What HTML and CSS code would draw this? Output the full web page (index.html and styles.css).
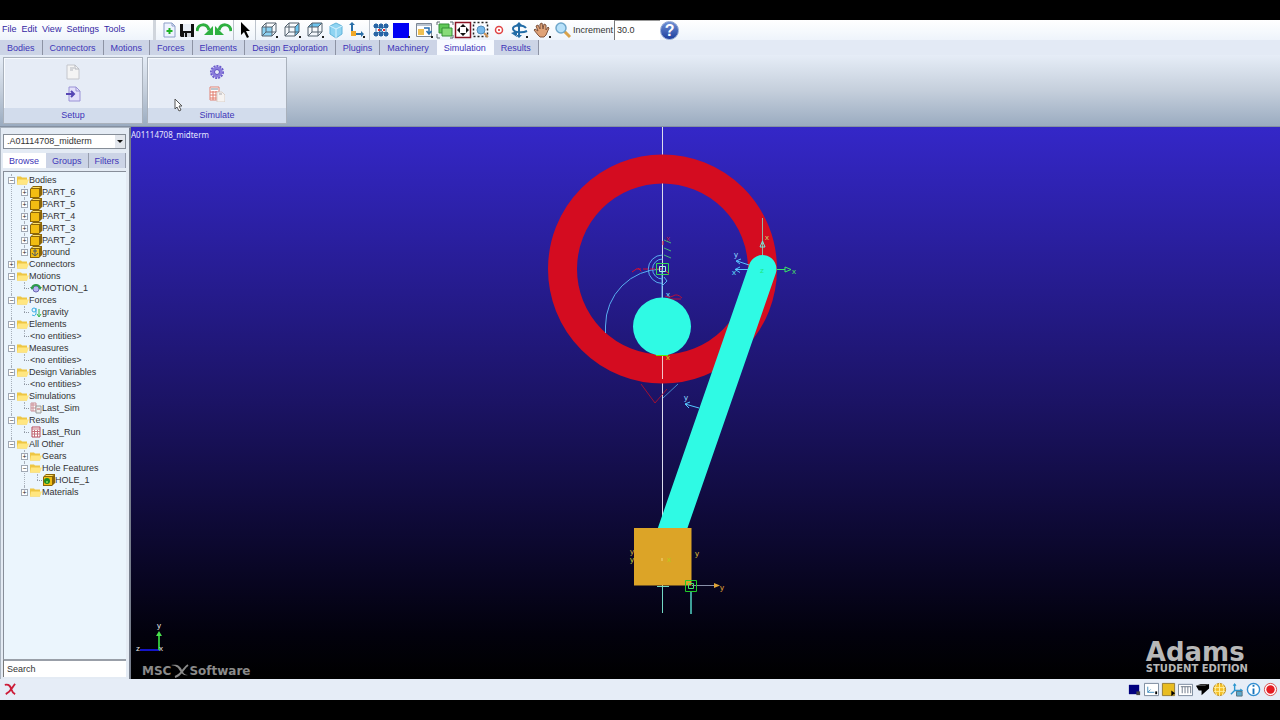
FILE: index.html
```html
<!DOCTYPE html>
<html lang="en">
<head>
    <meta charset="UTF-8">
    <meta name="viewport" content="width=device-width, initial-scale=1.0">
    <title>Adams Student Edition</title>
    <link rel="stylesheet" href="styles.css">
</head>
<body>

    <!-- Shared icons -->
    <svg class="sprite" aria-hidden="true">
        <symbol id="folder" viewBox="0 0 12 11"><path d="M0 2h4l1 1h5v7H0z" fill="#eec643"/><path d="M1 5h11l-2 5H0z" fill="#ffe680"/></symbol>
        <symbol id="part" viewBox="0 0 12 12"><path d="M0 3l3-3h9v9l-3 3H0z" fill="#8a6508"/><path d="M1 3h8v8H1z" fill="#f2bd12"/><path d="M2 2l1-1h8l-2 1z" fill="#ffe168"/></symbol>
        <symbol id="page" viewBox="0 0 16 16"><path d="M2 1h8l4 4v10H2z" fill="#f4f4f4" stroke="#c4c6cc"/><path d="M10 1v4h4M5 4h4M5 6h3" fill="none" stroke="#b4b7bf"/></symbol>
        <symbol id="calc" viewBox="0 0 12 12"><path d="M2 1h8v10H2z" fill="#fff" stroke="#b5485a"/><path d="M2 3h8M2 5.500h8M2 8h8M4.500 4v7M7.500 4v7" stroke="#c4707c"/></symbol>
        <symbol id="cube" viewBox="0 0 18 18"><path d="M2 6l4-4h10v9l-4 4H2zM2 6h10v9M12 6l4-4M6 2v9h10M6 11l-4 4" fill="none" stroke="#54626e"/></symbol>
    </svg>

    <div class="app">
        <header class="topbar">
            <nav class="menu" aria-label="Menu">
                <button>File</button><button>Edit</button><button>View</button><button>Settings</button><button>Tools</button>
            </nav>
            <div class="toolbar">
                <button class="tool" aria-label="New"><svg viewBox="0 0 18 18"><path d="M4 2h8l3 3v11H4z" fill="#eef3ff" stroke="#8d9fc8"/><path d="M12 2v3h3" fill="none" stroke="#8d9fc8"/><path d="M9.500 7v6M6.500 10h6" stroke="#20b324" stroke-width="2"/></svg></button>
                <button class="tool" aria-label="Save"><svg viewBox="0 0 18 18"><path d="M2 3h14v13H3l-1-1z" fill="#111"/><path d="M5 3h8v7H5z" fill="#e8eef6"/><path d="M6 12h7v4H6z" fill="#cfd4da"/><path d="M7 12h2v4H7z" fill="#111"/></svg></button>
                <button class="tool" aria-label="Redo"><svg viewBox="0 0 18 18"><path d="M1 10c1-8 10-8 12-1" fill="none" stroke="#2eb040" stroke-width="3"/><path d="M17 5v9H8z" fill="#2eb040"/></svg></button>
                <button class="tool" aria-label="Undo"><svg viewBox="0 0 18 18"><path d="M17 10c-1-8-10-8-12-1" fill="none" stroke="#2eb040" stroke-width="3"/><path d="M1 5v9h9z" fill="#2eb040"/></svg></button>
                <span class="divider"></span>
                <button class="tool" aria-label="Select"><svg viewBox="0 0 18 18"><path d="M5 1v13l3-3 3 6 2-1-3-6h4z" fill="#000"/></svg></button>
                <span class="divider"></span>
                <button class="tool wide" aria-label="Front view"><svg viewBox="0 0 18 18"><path d="M2 6h10v9H2z" fill="#8dd2f2"/><use href="#cube"/></svg></button>
                <button class="tool wide" aria-label="Right view"><svg viewBox="0 0 18 18"><path d="M12 6l4-4v9l-4 4z" fill="#6cc4ee"/><use href="#cube"/></svg></button>
                <button class="tool wide" aria-label="Top view"><svg viewBox="0 0 18 18"><path d="M2 6l4-4h10l-4 4z" fill="#6cc4ee"/><use href="#cube"/></svg></button>
                <button class="tool" aria-label="Isometric view"><svg viewBox="0 0 18 18"><path d="M9 2l6 3v8l-6 4-6-4V5z" fill="#8fd4f2" stroke="#62b4da"/><path d="M3 5l6 3 6-3M9 8v9" fill="none" stroke="#d9f3ff"/></svg></button>
                <button class="tool wide" aria-label="Coordinate system"><svg viewBox="0 0 18 18"><path d="M5 2v11h11" fill="none" stroke="#2a6fa8" stroke-width="2"/><path d="M2 4l3-3 3 3zM14 10l3 3-3 3z" fill="#2a6fa8"/><path d="M4 10h5v5H4z" fill="#f0a828"/></svg></button>
                <span class="divider"></span>
                <button class="tool" aria-label="Icons"><svg viewBox="0 0 18 18"><path d="M1 5h16M1 13h16M4 2v14M9 2v14M14 2v14M3 3l12 12M15 3L3 15" stroke="#3a79ae"/><path d="M2 3h4v4H2zM7 3h4v4H7zM12 3h4v4h-4zM2 11h4v4H2zM7 11h4v4H7zM12 11h4v4h-4z" fill="#2865a5"/><path d="M6 8h2v2H6zM11 8h2v2h-2z" fill="#d33"/></svg></button>
                <button class="tool wide" aria-label="Background colour"><svg viewBox="0 0 18 18"><path d="M1 2h16v15H1z" fill="#0000f4"/></svg></button>
                <button class="tool wide" aria-label="Window layout"><svg viewBox="0 0 18 18"><path d="M1.500 2.500h15v13h-15z" fill="#fff" stroke="#7d8794"/><path d="M2 3h14v2H2z" fill="#b9c4d0"/><path d="M3 8h6v6H3z" fill="#efc052"/><path d="M9 7h5v5M11.500 10l2.500 3 2.500-3" fill="none" stroke="#266eb0" stroke-width="1.500"/></svg></button>
                <button class="tool" aria-label="Render mode"><svg viewBox="0 0 18 18"><path d="M3 3h10v9H3z" fill="#60c857" stroke="#338f37"/><path d="M6 7h10v8H6z" fill="#88dc79" stroke="#338f37"/><path d="M1 4V1h3M14 1h3v3M1 13v4h3M14 17h3v-3" fill="none" stroke="#5d6970"/></svg></button>
                <button class="tool" aria-label="Fit view"><svg viewBox="0 0 18 18"><path d="M1.500 1.500h15v15h-15z" fill="#fff" stroke="#8c1524" stroke-width="1.500"/><path d="M9 3l3 3H6zM9 15l3-3H6zM3 9l3-3v6zM15 9l-3-3v6z" fill="#111"/></svg></button>
                <button class="tool" aria-label="Zoom box"><svg viewBox="0 0 18 18"><path d="M1.500 1.500h14v14h-14z" fill="none" stroke="#222" stroke-width="1.500" stroke-dasharray="2 2"/><path d="M12 12l4 4" stroke="#ce9150" stroke-width="2"/><circle cx="9" cy="9" r="4" fill="#76b8ea" stroke="#558ebb"/></svg></button>
                <button class="tool" aria-label="Centre"><svg viewBox="0 0 18 18"><circle cx="9" cy="9" r="3.500" fill="#fff" stroke="#e04444" stroke-width="1.500"/><circle cx="9" cy="9" r="1" fill="#d22"/></svg></button>
                <button class="tool wide" aria-label="Rotate"><svg viewBox="0 0 18 18"><path d="M9 3v12M16 7c-3-4-14-3-13 1s10 4 14 2" fill="none" stroke="#226ca6" stroke-width="2"/><path d="M6 4l3-3 3 3zM6 14l3 3 3-3zM1 12l6-2v6z" fill="#226ca6"/></svg></button>
                <button class="tool wide" aria-label="Pan"><svg viewBox="0 0 18 18"><path d="M5 14l-4-5 1-1 3 2-2-5 2-1 2 4V3l2-1 1 6 1-5 2 1v5l2-3 1 1-3 7-2 2H7z" fill="#dfa277" stroke="#80543d"/></svg></button>
                <button class="tool" aria-label="Zoom"><svg viewBox="0 0 18 18"><path d="M10 10l6 6" stroke="#d9a24a" stroke-width="3"/><circle cx="7" cy="7" r="5" fill="#b7e1fa" stroke="#6fa7cb" stroke-width="1.500"/></svg></button>
                <label class="increment" for="increment">Increment</label>
                <input id="increment" class="increment-input" type="text" value="30.0">
                <button class="tool help" aria-label="Help">?</button>
            </div>
        </header>

        <nav class="tabs" aria-label="Ribbon tabs">
            <button>Bodies</button>
            <button>Connectors</button>
            <button>Motions</button>
            <button>Forces</button>
            <button>Elements</button>
            <button>Design Exploration</button>
            <button>Plugins</button>
            <button class="last">Machinery</button>
            <button class="active">Simulation</button>
            <button>Results</button>
        </nav>

        <div class="ribbon">
            <section class="group">
                <div class="group-icons">
                    <button aria-label="New script"><svg viewBox="0 0 16 16"><use href="#page"/></svg></button>
                    <button aria-label="Import script"><svg viewBox="0 0 16 16"><path d="M4 1h7l4 4v10H4z" fill="#e3e0fa" stroke="#9a92d6"/><path d="M11 1v4h4" fill="none" stroke="#9a92d6"/><path d="M1 8h7M6 5l3 3-3 3" fill="none" stroke="#5646b4" stroke-width="2"/></svg></button>
                </div>
                <h2>Setup</h2>
            </section>
            <section class="group">
                <div class="group-icons">
                    <button aria-label="Run simulation"><svg viewBox="0 0 16 16"><circle cx="8" cy="8" r="6" fill="none" stroke="#6a5acb" stroke-width="2" stroke-dasharray="2 1"/><circle cx="8" cy="8" r="4" fill="#e9e6fd" stroke="#8a7cdc" stroke-width="3"/><circle cx="8" cy="8" r="2.500" fill="#e6ecf6" stroke="#5a4ac0"/></svg></button>
                    <button aria-label="Run script"><svg viewBox="0 0 16 16"><path d="M1 1h9v13H1z" fill="#fff" stroke="#e08274"/><path d="M2 2h7v2H2z" fill="#bdc6cd"/><path d="M1 6h9M1 9h9M1 12h9M4 5v9M7 5v9" stroke="#e27a6a"/><path d="M8 6h5l3 3v7H8z" fill="#f6f3f1" stroke="#d8cfc9"/><path d="M10 8h3" stroke="#a9a9b0"/></svg></button>
                </div>
                <h2>Simulate</h2>
            </section>
            <svg class="cursor" viewBox="0 0 10 14" aria-hidden="true"><path d="M1 1v10l2-2 2 4 2-1-2-4h3z" fill="#fff" stroke="#555"/></svg>
        </div>

        <div class="workspace">
            <aside class="browser">
                <div class="model-box">
                    <select class="model" aria-label="Model"><option>.A01114708_midterm</option></select>
                </div>
                <div class="browser-tabs">
                    <button class="active">Browse</button>
                    <button>Groups</button>
                    <button>Filters</button>
                </div>
                <ul class="tree">
                    <li><div class="row"><button class="toggle" aria-label="Collapse">−</button><svg><use href="#folder"/></svg>Bodies</div>
                        <ul>
                            <li><div class="row"><button class="toggle" aria-label="Expand">+</button><svg><use href="#part"/></svg>PART_6</div></li>
                            <li><div class="row"><button class="toggle" aria-label="Expand">+</button><svg><use href="#part"/></svg>PART_5</div></li>
                            <li><div class="row"><button class="toggle" aria-label="Expand">+</button><svg><use href="#part"/></svg>PART_4</div></li>
                            <li><div class="row"><button class="toggle" aria-label="Expand">+</button><svg><use href="#part"/></svg>PART_3</div></li>
                            <li><div class="row"><button class="toggle" aria-label="Expand">+</button><svg><use href="#part"/></svg>PART_2</div></li>
                            <li><div class="row"><button class="toggle" aria-label="Expand">+</button><svg viewBox="0 0 12 12"><use href="#part"/><path d="M5 2v8M3 5h4M2 7q3 5 6 0" fill="none" stroke="#4b5a68"/></svg>ground</div></li>
                        </ul>
                    </li>
                    <li><div class="row"><button class="toggle" aria-label="Expand">+</button><svg><use href="#folder"/></svg>Connectors</div></li>
                    <li><div class="row"><button class="toggle" aria-label="Collapse">−</button><svg><use href="#folder"/></svg>Motions</div>
                        <ul>
                            <li><div class="row leaf"><svg viewBox="0 0 12 12"><circle cx="6" cy="7" r="3" fill="#b7b4f0" stroke="#6a66b5"/><path d="M2 6c1-4 7-4 8 0" fill="none" stroke="#2c9a4a" stroke-width="2"/><path d="M0 5h4L2 8zM8 5h4l-2 3z" fill="#2c9a4a"/></svg>MOTION_1</div></li>
                        </ul>
                    </li>
                    <li><div class="row"><button class="toggle" aria-label="Collapse">−</button><svg><use href="#folder"/></svg>Forces</div>
                        <ul>
                            <li><div class="row leaf"><svg viewBox="0 0 12 12"><circle cx="4" cy="4" r="2" fill="none" stroke="#39aee4"/><path d="M6 2v6q-1 3-4 1" fill="none" stroke="#39aee4"/><path d="M9 3v7M7 8l2 3 2-3" fill="none" stroke="#30b548"/></svg>gravity</div></li>
                        </ul>
                    </li>
                    <li><div class="row"><button class="toggle" aria-label="Collapse">−</button><svg><use href="#folder"/></svg>Elements</div>
                        <ul><li><div class="row leaf">&lt;no entities&gt;</div></li></ul>
                    </li>
                    <li><div class="row"><button class="toggle" aria-label="Collapse">−</button><svg><use href="#folder"/></svg>Measures</div>
                        <ul><li><div class="row leaf">&lt;no entities&gt;</div></li></ul>
                    </li>
                    <li><div class="row"><button class="toggle" aria-label="Collapse">−</button><svg><use href="#folder"/></svg>Design Variables</div>
                        <ul><li><div class="row leaf">&lt;no entities&gt;</div></li></ul>
                    </li>
                    <li><div class="row"><button class="toggle" aria-label="Collapse">−</button><svg><use href="#folder"/></svg>Simulations</div>
                        <ul>
                            <li><div class="row leaf"><svg viewBox="0 0 12 12"><path d="M1 1h5v8H1z" fill="#fff" stroke="#c98d96"/><path d="M1 3h5M1 6h5M3 1v8" stroke="#c98d96"/><path d="M6 4h5v7H6z" fill="#eee" stroke="#999"/><path d="M7 7h3" stroke="#b66"/></svg>Last_Sim</div></li>
                        </ul>
                    </li>
                    <li><div class="row"><button class="toggle" aria-label="Collapse">−</button><svg><use href="#folder"/></svg>Results</div>
                        <ul>
                            <li><div class="row leaf"><svg><use href="#calc"/></svg>Last_Run</div></li>
                        </ul>
                    </li>
                    <li><div class="row"><button class="toggle" aria-label="Collapse">−</button><svg><use href="#folder"/></svg>All Other</div>
                        <ul>
                            <li><div class="row"><button class="toggle" aria-label="Expand">+</button><svg><use href="#folder"/></svg>Gears</div></li>
                            <li><div class="row"><button class="toggle" aria-label="Collapse">−</button><svg><use href="#folder"/></svg>Hole Features</div>
                                <ul>
                                    <li><div class="row leaf"><svg viewBox="0 0 12 12"><use href="#part"/><circle cx="4" cy="7" r="3" fill="#1b8a26"/><circle cx="4" cy="8" r="1" fill="#8fe05c"/></svg>HOLE_1</div></li>
                                </ul>
                            </li>
                            <li><div class="row"><button class="toggle" aria-label="Expand">+</button><svg><use href="#folder"/></svg>Materials</div></li>
                        </ul>
                    </li>
                </ul>
                <input class="search" type="text" value="Search" aria-label="Search">
            </aside>

            <main class="viewport">
                <svg class="scene" viewBox="131 127 1149 552" role="img" aria-label="Model view">
                    <!-- vertical axis -->
                    <path d="M662.500 127V613" stroke="#dcdcec"/>
                    <!-- ring -->
                    <circle cx="662.500" cy="269" r="100" fill="none" stroke="#d40c20" stroke-width="29"/>
                    <path d="M662.500 355v24" stroke="#f4c4c8"/>
                    <!-- centre joint -->
                    <g fill="none" stroke="#58aef0">
                        <path d="M605.500 333V326A57 57 0 0 1 662 269V298"/>
                        <path d="M662.500 255a14 14 0 0 0 0 28.500M662.500 259a10 10 0 0 0 0 20M662 286l5-5-3-4"/>
                    </g>
                    <path d="M632 272l6-4 4 4M636 269h26" fill="none" stroke="#d40c30" stroke-dasharray="5 2"/>
                    <path d="M664 240l7 3M664 248l7 3M664 255l7 3" stroke="#45b878"/>
                    <g fill="none" stroke="#35d855"><path d="M656.500 263.500h12v11h-12z"/><path d="M659.500 266.500h6v5h-6z" stroke="#a2ffda"/></g>
                    <path d="M666 271l3 3M663 241v4" stroke="#e62c2c"/>
                    <text x="666" y="241" fill="#b81449">x</text>
                    <text x="666" y="297" fill="#7de8ff">x</text>
                    <path d="M665 296q4 3 8 0t9 2M667 299h14" fill="none" stroke="#b5103c"/>
                    <!-- disk -->
                    <circle cx="662" cy="326.500" r="29" fill="#2ffae4"/>
                    <path d="M656 355.500h12" stroke="#5ee300"/>
                    <text x="666" y="360" fill="#c6e600">x</text>
                    <path d="M641 384l14 19 12-14" fill="none" stroke="#a01032"/>
                    <path d="M663 398l15-14" stroke="#4289cb"/>
                    <!-- connecting link -->
                    <path d="M762.500 218V255" stroke="#92b6a2"/>
                    <path d="M762.500 269L664 553" stroke="#2ffae4" stroke-width="28" stroke-linecap="round"/>
                    <g fill="none" stroke="#6bf0e0">
                        <path d="M760 247h5l-2.500-6z"/>
                        <path d="M749 265l-12-4M741 259l-5 2 4 3" stroke="#56c6ff"/>
                        <path d="M748 269.500h-13M740 267l-5 2.500 5 3" stroke="#56c6ff"/>
                        <path d="M777 269.500h8M785 267v5l6-2.500z" stroke="#38e866"/>
                        <path d="M699 408l-14-4M690 402l-5 2 4 4" stroke="#56c6ff"/>
                    </g>
                    <text x="765" y="240" fill="#c8d870">x</text>
                    <text x="734" y="257" fill="#8cd8ff">y</text>
                    <text x="732" y="275" fill="#60e0ff">x</text>
                    <text x="792" y="274" fill="#48e060">x</text>
                    <text x="760" y="273" fill="#20e880">z</text>
                    <text x="684" y="400" fill="#8cd8ff">y</text>
                    <!-- slider block -->
                    <path d="M634 528h57.500v57.500H634z" fill="#dca427"/>
                    <path d="M662 558v3" stroke="#f4d47c"/>
                    <text x="667" y="562" fill="#b7cc18">x</text>
                    <text x="630" y="554" fill="#c8a838">y</text>
                    <text x="630" y="562" fill="#c8c838">y</text>
                    <text x="695" y="556" fill="#dcb838">y</text>
                    <text x="720" y="590" fill="#e0a437">y</text>
                    <path d="M657 586.500h12M662.500 586v27" stroke="#72d8c4"/>
                    <path d="M691 592v22" stroke="#3e9f98" stroke-width="2"/>
                    <path d="M692 585.500h22" stroke="#8890a8"/>
                    <path d="M714 583v5l6-2.500z" fill="#e0a437"/>
                    <path d="M685.500 580.500h11v11h-11z" fill="none" stroke="#20cc28"/>
                    <path d="M688.500 583.500h5v5h-5z" fill="none" stroke="#4ae86a"/>
                </svg>
                <div class="model-name">A01114708_midterm</div>
                <svg class="triad" viewBox="0 0 34 34" aria-hidden="true">
                    <path d="M24 28H5" stroke="#1414c8" stroke-width="2"/>
                    <path d="M24 28V11" stroke="#30b838" stroke-width="2"/>
                    <path d="M21 14l3-5 3 5z" fill="#4ae04e"/>
                    <text x="22" y="6">y</text><text x="1" y="29">z</text><text x="24" y="29">x</text>
                </svg>
                <div class="msc">MSC<svg viewBox="0 0 18 14" aria-hidden="true"><path d="M0 1c7-1 9 1 11 5 1 3 3 5 6 5-4 1-6-1-8-4C7 3 5 2 0 1z" fill="#8a8a8a"/><path d="M17 1C12 4 11 11 4 13" fill="none" stroke="#8a8a8a" stroke-width="2"/></svg>Software</div>
                <div class="adams"><strong>Adams</strong><span>STUDENT EDITION</span></div>
            </main>
        </div>

        <footer class="statusbar">
            <svg viewBox="0 0 16 16" aria-hidden="true"><path d="M3 3c5-1 6 2 7 5s2 4 4 5M14 2c-3 3-4 8-10 11" fill="none" stroke="#cc1c38" stroke-width="2"/></svg>
            <div class="status-icons">
                <button aria-label="Background"><svg viewBox="0 0 16 16"><path d="M2 3h11v10H2z" fill="#00007e"/><path d="M10 10h4v4h-4z" fill="#444"/></svg></button>
                <button aria-label="Triad"><svg viewBox="0 0 16 16"><path d="M.5 1.500h15v13H.5z" fill="#fff" stroke="#77869a"/><path d="M4 5v6h7M4 11l3-3" fill="none" stroke="#438fc0"/><path d="M12 10h2v3h-2z"/></svg></button>
                <button aria-label="Shading"><svg viewBox="0 0 16 16"><path d="M1.500 1.500h13v13h-13z" fill="#e8bc20" stroke="#927b35"/><path d="M11 9v6l4-3z"/></svg></button>
                <button aria-label="Grid"><svg viewBox="0 0 16 16"><path d="M.5 2.500h15v12H.5z" fill="#fff" stroke="#77869a"/><path d="M3 5h11M4.500 5v7M7.500 5v7M10.500 5v7M13.500 5v7" stroke="#6c7888"/></svg></button>
                <button aria-label="Projection"><svg viewBox="0 0 16 16"><path d="M1 4l5-2h9l-5 2z" fill="#333"/><path d="M1 4h9v5H4zM10 4l5-2v5l-8 7V9z" fill="#000"/></svg></button>
                <button aria-label="Render"><svg viewBox="0 0 16 16"><circle cx="8" cy="8" r="6.500" fill="#f4bf27" stroke="#b78820"/><path d="M8 1v14M2 6h12M2 10h12M5 2c-2 4-2 8 0 12M11 2c2 4 2 8 0 12" fill="none" stroke="#fff0a0"/></svg></button>
                <button aria-label="Icon visibility"><svg viewBox="0 0 16 16"><path d="M6 2v7h8M6 9l-4 4" fill="none" stroke="#2a95cf" stroke-width="1.500"/><path d="M4 4l2-3 2 3zM12 7l3 2-3 2z" fill="#2a95cf"/><path d="M8 10h6v5H8z" fill="#5aa9cc" stroke="#59717f"/></svg></button>
                <button aria-label="Information"><svg viewBox="0 0 16 16"><circle cx="8" cy="8" r="6.500" fill="#fff" stroke="#348fd0" stroke-width="1.500"/><path d="M8 3v2M8 7v6" stroke="#1774bd" stroke-width="2"/></svg></button>
                <button aria-label="Stop"><svg viewBox="0 0 16 16"><circle cx="8" cy="8" r="6.500" fill="#fff" stroke="#d64242"/><circle cx="8" cy="8" r="4.500" fill="#e51b22"/></svg></button>
            </div>
        </footer>
    </div>

</body>
</html>
```
FILE: styles.css
```css
* {
    box-sizing: border-box;
}
body {
    margin: 0;
    background-color: #000;
    font-family: "Liberation Sans", Arial, sans-serif;
    font-size: 9px;
    color: #333;
}
button, input, select {
    font: inherit;
    color: inherit;
    margin: 0;
    padding: 0;
    border: none;
    border-radius: 0;
    background: none;
}
ul {
    list-style: none;
    margin: 0;
    padding: 0;
}
svg {
    display: block;
    flex: none;
}
.sprite {
    position: absolute;
    width: 0;
    height: 0;
}
.app {
    display: flex;
    flex-direction: column;
    height: 100vh;
    padding: 20px 0;
}

/* Menu and toolbar */
.topbar {
    display: flex;
    height: 20px;
    background: linear-gradient(#fff, #eef4fb);
}
.menu {
    display: flex;
    align-items: flex-start;
    width: 156px;
    border-right: 3px solid #d0d5dc;
    margin-right: 4px;
    color: #3427a4;
}
.menu button {
    padding: 0 2px;
    line-height: 18px;
    margin-right: 1px;
}
.toolbar {
    display: flex;
    align-items: center;
}
.tool {
    width: 18px;
    height: 20px;
    position: relative;
}
.tool svg {
    width: 18px;
    height: 18px;
}
.tool.wide {
    width: 23px;
    padding-left: 2px;
}
.tool.wide::after {
    content: "";
    position: absolute;
    right: 3px;
    bottom: 2px;
    width: 2px;
    height: 2px;
    background-color: #222;
}
.divider {
    width: 1px;
    height: 20px;
    margin: 0 2px 0 1px;
    background-color: #bcc3cc;
}
.increment {
    padding: 0 1px;
}
.increment-input {
    width: 46px;
    height: 20px;
    padding: 0 0 1px 2px;
    border-left: 1px solid #777;
    border-top: 1px solid #999;
    background-color: #fff;
}
.tool.help {
    width: 19px;
    height: 19px;
    border: 1px solid #8fa6d2;
    border-radius: 50%;
    background: linear-gradient(#6f90d5, #1d3f9e);
    color: #fff;
    font-size: 16px;
    font-weight: bold;
    line-height: 18px;
}

/* Ribbon */
.tabs {
    display: flex;
    height: 15px;
    background-color: #e3eaf5;
    color: #4034b8;
}
.tabs button {
    padding: 0 7px;
    border-right: 1px solid #8d93a4;
    background-color: #ccd4e6;
    line-height: 16px;
}
.tabs .last {
    border-right-color: #ccd4e6;
}
.tabs .active {
    background-color: #f7faff;
    border-right-color: #f7faff;
}
.ribbon {
    position: relative;
    display: flex;
    gap: 4px;
    height: 72px;
    padding: 2px 3px;
    background: linear-gradient(#e6edf7, #c5cfdc 50%, #9aabc0);
    border-bottom: 1px solid #8490a2;
}
.group {
    display: flex;
    flex-direction: column;
    width: 140px;
    height: 67px;
    border: 1px solid #a9b1bc;
    background-color: #e6ecf6;
    box-shadow: inset 1px 1px #f8fbff;
}
.group-icons {
    flex: 1;
    display: flex;
    flex-direction: column;
    align-items: center;
    justify-content: center;
    gap: 6px;
}
.group-icons svg {
    width: 16px;
    height: 16px;
}
.group h2 {
    margin: 0;
    font-size: 9px;
    font-weight: normal;
    line-height: 14px;
    padding-bottom: 1px;
    text-align: center;
    color: #4034b8;
    background-color: #d2dcec;
}
.cursor {
    position: absolute;
    left: 174px;
    top: 43px;
    width: 10px;
    height: 14px;
}

/* Model browser */
.workspace {
    flex: 1;
    display: flex;
    min-height: 0;
}
.browser {
    display: flex;
    flex-direction: column;
    width: 131px;
    padding: 6px 3px 2px 2px;
    background-color: #e4ebf4;
    border-right: 2px solid #777e8c;
    border-left: 1px solid #aab4c0;
    border-top: 1px solid #aab4c0;
}
.model-box {
    position: relative;
    height: 15px;
    border: 1px solid #858d97;
    background-color: #fff;
}
.model {
    display: block;
    appearance: none;
    width: 100%;
    height: 13px;
    padding: 0 12px 1px 3px;
    background: linear-gradient(#e2e6ec, #e2e6ec) right / 10px 100% no-repeat;
}
.model-box::after {
    content: "";
    position: absolute;
    right: 2px;
    top: 5px;
    border: 3px solid transparent;
    border-top-color: #111;
    pointer-events: none;
}
.browser-tabs {
    display: flex;
    margin: 4px 0 3px;
    color: #4034b8;
}
.browser-tabs button {
    flex: auto;
    height: 15px;
    padding: 0 4px;
    background-color: #ccd4e6;
    border-right: 1px solid #969dad;
}
.browser-tabs .active {
    background-color: #fff;
    border-right-color: #fff;
}
.tree {
    flex: 1;
    overflow: hidden;
    padding: 2px 0 0 4px;
    background-color: #ebf5fd;
    border-top: 1px solid #878e99;
    border-left: 1px solid #878e99;
}
.tree ul {
    padding-left: 13px;
}
.tree li {
    position: relative;
}
.tree li::before {
    content: "";
    position: absolute;
    left: 3px;
    top: 0;
    bottom: 0;
    border-left: 1px dotted #a8b0ba;
}
.tree li:last-child::before {
    bottom: auto;
    height: 6px;
}
.row {
    position: relative;
    display: flex;
    align-items: center;
    height: 12px;
    white-space: nowrap;
}
.row svg {
    width: 12px;
    height: 12px;
}
.toggle {
    width: 7px;
    height: 7px;
    margin-right: 2px;
    border: 1px solid #a0a8b4;
    background-color: #fff;
    font-size: 7px;
    line-height: 5px;
    color: #222;
}
.leaf {
    padding-left: 9px;
}
.leaf::before {
    content: "";
    position: absolute;
    left: 3px;
    top: 6px;
    width: 5px;
    border-top: 1px dotted #8e96a2;
}
.search {
    width: 100%;
    height: 18px;
    padding: 0 0 1px 3px;
    border-top: 2px solid #999fa8;
    border-left: 1px solid #777;
    background-color: #fff;
}

/* 3D view */
.viewport {
    position: relative;
    flex: 1;
    min-width: 0;
    background: linear-gradient(#3427c8, #1b1364 50%, #02010c 92%, #000);
    overflow: hidden;
}
.scene {
    width: 100%;
    height: 100%;
    font-size: 8px;
}
.model-name {
    position: absolute;
    left: 0;
    top: 3px;
    font-family: "Noto Sans", sans-serif;
    font-size: 8px;
    line-height: 10px;
    color: #e8e8ff;
}
.triad {
    position: absolute;
    left: 4px;
    bottom: 23px;
    width: 34px;
    height: 34px;
    fill: #e4e4e4;
    font-size: 8px;
    overflow: visible;
}
.msc {
    position: absolute;
    left: 11px;
    bottom: 1px;
    display: flex;
    align-items: center;
    font-family: "DejaVu Sans", sans-serif;
    font-size: 12px;
    line-height: 14px;
    font-weight: bold;
    color: #8a8a8a;
}
.msc svg {
    width: 18px;
    height: 14px;
}
.adams {
    position: absolute;
    right: 32px;
    bottom: 6px;
    display: flex;
    flex-direction: column;
    font-family: "DejaVu Sans", sans-serif;
    color: #b8b8b8;
}
.adams strong {
    font-size: 26px;
    line-height: 26px;
}
.adams span {
    font-size: 10px;
    font-weight: bold;
    line-height: 8px;
}

/* Status bar */
.statusbar {
    display: flex;
    align-items: center;
    justify-content: space-between;
    height: 21px;
    padding: 0 2px;
    background-color: #e6edf7;
}
.statusbar svg {
    width: 15px;
    height: 15px;
}
.status-icons {
    display: flex;
    gap: 2px;
}
```
